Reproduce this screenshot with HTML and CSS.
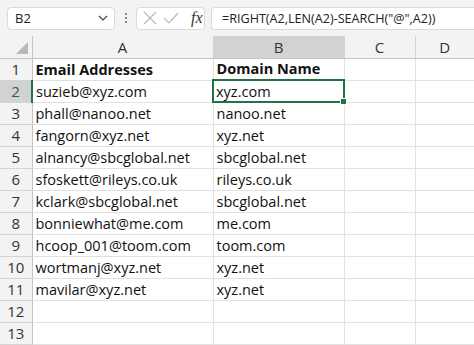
FILE: index.html
```html
<!DOCTYPE html>
<html lang="en">
<head>
    <meta charset="UTF-8">
    <meta name="viewport" content="width=device-width, initial-scale=1.0">
    <title>Extract domain names</title>
    <link rel="stylesheet" href="styles.css">
</head>
<body>
    <!-- Barra de fórmulas -->
    <div class="formula-bar">
        <div class="name-box">
            <span>B2</span>
            <svg class="chevron" width="10" height="6" viewBox="0 0 10 6"><path d="M1 1 L5 5 L9 1" fill="none" stroke="#444" stroke-width="1.2"/></svg>
        </div>
        <div class="dots"><i></i><i></i><i></i></div>
        <div class="fx-buttons">
            <svg width="14" height="14" viewBox="0 0 14 14"><path d="M1 1 L13 13 M13 1 L1 13" stroke="#b8b8b8" stroke-width="1.2"/></svg>
            <svg width="16" height="14" viewBox="0 0 16 14"><path d="M1 7 L6 12 L15 2" fill="none" stroke="#b8b8b8" stroke-width="1.2"/></svg>
            <span class="fx">fx</span>
        </div>
        <div class="formula-input">=RIGHT(A2,LEN(A2)-SEARCH("@",A2))</div>
    </div>

    <!-- Hoja de cálculo -->
    <table class="sheet">
        <colgroup>
            <col class="c-row"><col class="c-a"><col class="c-b"><col class="c-c"><col class="c-d">
        </colgroup>
        <tr class="head">
            <th class="corner"><span class="tri"></span></th>
            <th>A</th><th class="sel-col">B</th><th>C</th><th>D</th>
        </tr>
        <tr><th>1</th><td class="bold">Email Addresses</td><td class="bold">Domain Name</td><td></td><td></td></tr>
        <tr><th class="sel-row">2</th><td>suzieb@xyz.com</td><td class="active">xyz.com<span class="handle"></span></td><td></td><td></td></tr>
        <tr><th>3</th><td>phall@nanoo.net</td><td>nanoo.net</td><td></td><td></td></tr>
        <tr><th>4</th><td>fangorn@xyz.net</td><td>xyz.net</td><td></td><td></td></tr>
        <tr><th>5</th><td>alnancy@sbcglobal.net</td><td>sbcglobal.net</td><td></td><td></td></tr>
        <tr><th>6</th><td>sfoskett@rileys.co.uk</td><td>rileys.co.uk</td><td></td><td></td></tr>
        <tr><th>7</th><td>kclark@sbcglobal.net</td><td>sbcglobal.net</td><td></td><td></td></tr>
        <tr><th>8</th><td>bonniewhat@me.com</td><td>me.com</td><td></td><td></td></tr>
        <tr><th>9</th><td>hcoop_001@toom.com</td><td>toom.com</td><td></td><td></td></tr>
        <tr><th>10</th><td>wortmanj@xyz.net</td><td>xyz.net</td><td></td><td></td></tr>
        <tr><th>11</th><td>mavilar@xyz.net</td><td>xyz.net</td><td></td><td></td></tr>
        <tr><th>12</th><td></td><td></td><td></td><td></td></tr>
        <tr><th>13</th><td></td><td></td><td></td><td></td></tr>
    </table>
</body>
</html>
```

FILE: styles.css
```css
/* Página completa */
body {
    margin: 0;
    width: 474px;
    height: 345px;
    overflow: hidden;
    background: #fff;
    font-family: "Open Sans", "Noto Sans", sans-serif;
    color: #222;
}

/* Barra de fórmulas */
.formula-bar {
    height: 36px;
    display: flex;
    align-items: center;
    background: #f3f3f3;
    box-sizing: border-box;
    padding-left: 7px;
}
.name-box {
    width: 108px;
    height: 23px;
    box-sizing: border-box;
    background: #fff;
    border: 1px solid #dadada;
    border-radius: 4px;
    display: flex;
    align-items: center;
    justify-content: space-between;
    padding: 0 6px 0 7px;
    font-size: 13px;
}
.dots {
    width: 21px;
    display: flex;
    flex-direction: column;
    align-items: center;
    gap: 2px;
}
.dots i {
    width: 2px;
    height: 2px;
    background: #888;
}
.fx-buttons {
    width: 69px;
    height: 23px;
    box-sizing: border-box;
    background: #fff;
    border: 1px solid #dadada;
    border-radius: 4px;
    display: flex;
    align-items: center;
    padding-left: 6px;
    gap: 6px;
}
.fx {
    font-family: "Liberation Serif", serif;
    font-style: italic;
    font-size: 16px;
    color: #333;
    margin-left: 6px;
}
.formula-input {
    flex: 1;
    margin-left: 6px;
    height: 23px;
    box-sizing: border-box;
    background: #fff;
    border: 1px solid #dadada;
    border-right: none;
    border-radius: 4px 0 0 4px;
    padding-left: 10px;
    font-size: 12.6px;
    line-height: 21px;
    color: #222;
    white-space: nowrap;
    overflow: hidden;
}

/* Tabla de la hoja */
.sheet {
    border-collapse: collapse;
    table-layout: fixed;
    width: 474px;
}
.c-row { width: 32px; }
.c-a { width: 181px; }
.c-b { width: 131px; }
.c-c { width: 71px; }
.c-d { width: 59px; }

.sheet tr {
    height: 22px;
}
.sheet td,
.sheet th {
    padding: 0 0 0 3px;
    border: 1px solid #e1e1e1;
    font-size: 14.5px;
    font-weight: normal;
    white-space: nowrap;
    overflow: hidden;
    text-align: left;
    color: #111;
    box-sizing: border-box;
    height: 22px;
}
.sheet th {
    background: #f3f3f3;
    text-align: center;
    padding: 0;
    color: #333;
    font-size: 15px;
    border-color: #d4d4d4;
}
.sheet tr:first-child th {
    border-top: none;
    border-bottom: 1px solid #c4c4c4;
    color: #333;
}
.sheet th:first-child {
    border-left: none;
    border-right: 1px solid #c4c4c4;
}
.sheet td:last-child,
.sheet th:last-child {
    border-right: none;
}
.corner {
    position: relative;
}
.tri {
    position: absolute;
    right: 4px;
    bottom: 4px;
    width: 0;
    height: 0;
    border-left: 12px solid transparent;
    border-bottom: 12px solid #b8b8b8;
}
.sheet th.sel-col {
    background: #d2d2d2;
    color: #1e6b40;
    border-bottom: 2px solid #217346;
}
.sheet th.sel-row {
    background: #d2d2d2;
    color: #1e6b40;
    border-right: 2px solid #217346;
}
.bold {
    font-weight: bold !important;
}
.sheet td.active {
    position: relative;
    border: 2px solid #217346;
    padding-left: 2px;
    overflow: visible;
}
.handle {
    position: absolute;
    right: -4px;
    bottom: -4px;
    width: 5px;
    height: 5px;
    background: #217346;
    border: 1px solid #fff;
}
```
